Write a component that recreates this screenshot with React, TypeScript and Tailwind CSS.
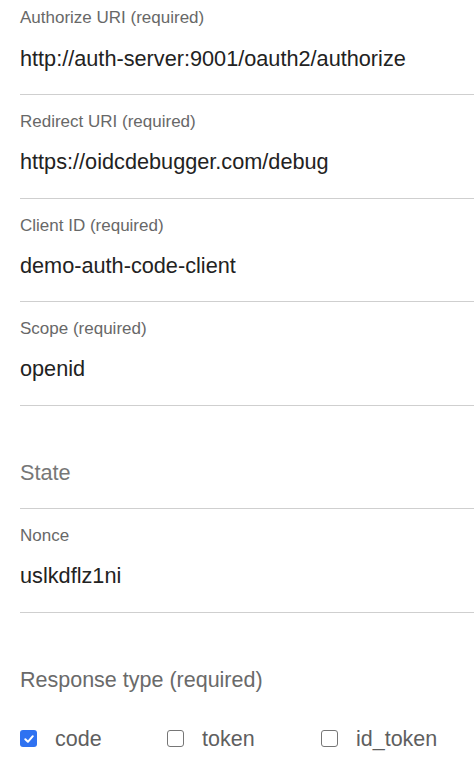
import React from "react";

const font = { fontFamily: '"Liberation Sans", Arial, sans-serif' };

function Field({
  label,
  value,
  first,
}: {
  label: string;
  value?: string;
  first?: boolean;
}) {
  const filled = value !== undefined;
  return (
    <div
      className={
        "flex flex-col border-b border-[#cfcfcf] " +
        (first ? "h-[95px] pt-[8px]" : "h-[103.6px] pt-[17px]")
      }
    >
      <div
        className={
          "text-[17px] leading-[20px] text-[#686868] " +
          (filled ? "" : "invisible")
        }
      >
        {label}
      </div>
      <div
        className={
          (first ? "mt-[18px] " : "mt-[17px] ") +
          "text-[21.7px] leading-[26px] " +
          (filled ? "text-[#222222]" : "text-[#777777]")
        }
      >
        {filled ? value : label}
      </div>
    </div>
  );
}

function Box({ checked }: { checked?: boolean }) {
  if (checked) {
    return (
      <div className="flex h-[17px] w-[17px] shrink-0 items-center justify-center rounded-[3px] bg-[#2f72f1]">
        <svg width="12" height="12" viewBox="0 0 12 12">
          <path
            d="M2.3 6.3 L4.9 8.8 L9.8 3.2"
            fill="none"
            stroke="white"
            strokeWidth="2"
            strokeLinecap="round"
            strokeLinejoin="round"
          />
        </svg>
      </div>
    );
  }
  return (
    <div className="h-[17px] w-[17px] shrink-0 rounded-[3px] border-[1.5px] border-[#767676] bg-white" />
  );
}

function Check({
  label,
  checked,
  width,
}: {
  label: string;
  checked?: boolean;
  width: string;
}) {
  return (
    <div className={"flex items-center " + width}>
      <Box checked={checked} />
      <span className="ml-[18px] text-[21.5px] leading-[26px] text-[#5f5f5f]">
        {label}
      </span>
    </div>
  );
}

export default function App() {
  return (
    <div className="h-[770px] w-[474px] overflow-hidden bg-white pl-[20px]" style={font}>
      <Field first label="Authorize URI (required)" value="http://auth-server:9001/oauth2/authorize" />
      <Field label="Redirect URI (required)" value="https://oidcdebugger.com/debug" />
      <Field label="Client ID (required)" value="demo-auth-code-client" />
      <Field label="Scope (required)" value="openid" />
      <Field label="State" />
      <Field label="Nonce" value="uslkdflz1ni" />
      <div className="pt-[54px] text-[21.5px] leading-[26px] text-[#6a6a6a]">
        Response type (required)
      </div>
      <div className="mt-[33px] flex items-center">
        <Check checked label="code" width="w-[147px]" />
        <Check label="token" width="w-[154px]" />
        <Check label="id_token" width="w-[130px]" />
      </div>
    </div>
  );
}
